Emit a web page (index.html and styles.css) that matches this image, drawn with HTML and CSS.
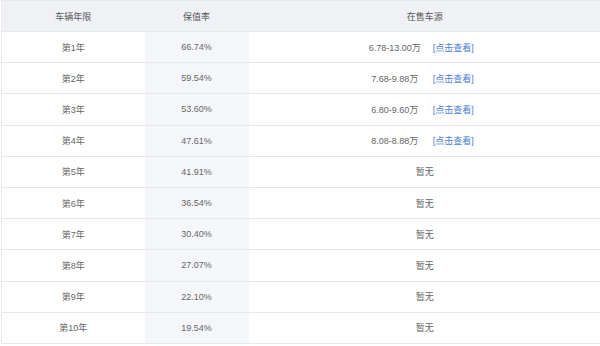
FILE: index.html
```html
<!doctype html>
<html lang="zh-CN">
    <head>
        <meta charset="UTF-8" />
        <title>保值率</title>
        <link rel="stylesheet" href="styles.css">
    </head>

    <body>
        <table class="value-table">
            <thead>
                <tr>
                    <th class="col-year">车辆年限</th>
                    <th class="col-rate">保值率</th>
                    <th class="col-source">在售车源</th>
                </tr>
            </thead>
            <tbody>
                <tr>
                    <td>第1年</td>
                    <td class="col-rate">66.74%</td>
                    <td><span class="price">6.78-13.00万</span><a class="view-link" href="#">[点击查看]</a></td>
                </tr>
                <tr>
                    <td>第2年</td>
                    <td class="col-rate">59.54%</td>
                    <td><span class="price">7.68-9.88万</span><a class="view-link" href="#">[点击查看]</a></td>
                </tr>
                <tr>
                    <td>第3年</td>
                    <td class="col-rate">53.60%</td>
                    <td><span class="price">6.80-9.60万</span><a class="view-link" href="#">[点击查看]</a></td>
                </tr>
                <tr>
                    <td>第4年</td>
                    <td class="col-rate">47.61%</td>
                    <td><span class="price">8.08-8.88万</span><a class="view-link" href="#">[点击查看]</a></td>
                </tr>
                <tr>
                    <td>第5年</td>
                    <td class="col-rate">41.91%</td>
                    <td>暂无</td>
                </tr>
                <tr>
                    <td>第6年</td>
                    <td class="col-rate">36.54%</td>
                    <td>暂无</td>
                </tr>
                <tr>
                    <td>第7年</td>
                    <td class="col-rate">30.40%</td>
                    <td>暂无</td>
                </tr>
                <tr>
                    <td>第8年</td>
                    <td class="col-rate">27.07%</td>
                    <td>暂无</td>
                </tr>
                <tr>
                    <td>第9年</td>
                    <td class="col-rate">22.10%</td>
                    <td>暂无</td>
                </tr>
                <tr>
                    <td>第10年</td>
                    <td class="col-rate">19.54%</td>
                    <td>暂无</td>
                </tr>
            </tbody>
        </table>
    </body>
</html>
```

FILE: styles.css
```css
* {
    box-sizing: border-box;
    margin: 0;
    padding: 0;
}

body {
    background: white;
    color: #666;
    font-family: Arial, "Liberation Sans", "Noto Sans CJK SC", sans-serif;
    font-size: 9px;
    overflow: hidden;
    padding-left: 1px;
}

.value-table {
    width: 600px;
    border-collapse: collapse;
    table-layout: fixed;
    border-left: 1px solid #ececec;
}

.value-table th,
.value-table td {
    text-align: center;
    vertical-align: middle;
    border-bottom: 1px solid #e8e8e8;
    padding: 0;
    white-space: nowrap;
}

.value-table th {
    height: 31px;
    background: #f0f1f5;
    color: #555;
    font-weight: normal;
    border-top: 1px solid #e8e9ee;
}

.value-table td {
    height: 31.2px;
}

.col-year {
    width: 143px;
}

.col-rate {
    width: 104px;
}

td.col-rate {
    background: #f5f6f9;
}

.price {
    display: inline-block;
    width: 76px;
    text-align: center;
}

.view-link {
    display: inline-block;
    width: 60px;
    text-align: left;
    color: #4a7ed2;
    text-decoration: none;
}
```
